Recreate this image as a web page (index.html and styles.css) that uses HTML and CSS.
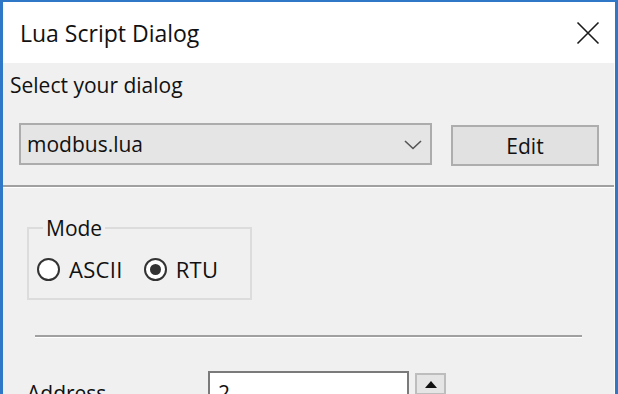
FILE: index.html
```html
<!DOCTYPE html>
<html>
<head>
<meta charset="utf-8">
<link rel="stylesheet" href="styles.css">
</head>
<body>
<div class="window">
  <div class="titlebar">
    <span class="title">Lua Script Dialog</span>
    <svg class="close" width="24" height="24" viewBox="0 0 24 24"><path d="M1.5 1.5 L22.5 22.5 M22.5 1.5 L1.5 22.5" stroke="#1a1a1a" stroke-width="1.6" fill="none"/></svg>
  </div>
  <div class="content">
    <div class="label">Select your dialog</div>
    <div class="combo-row">
      <div class="combo">
        <span class="combo-text">modbus.lua</span>
        <svg class="chevron" width="18" height="10" viewBox="0 0 18 10"><path d="M1 1 L9 8.5 L17 1" stroke="#555" stroke-width="1.6" fill="none"/></svg>
      </div>
      <div class="button">Edit</div>
    </div>
    <div class="sep"></div>
    <fieldset class="group">
      <legend>Mode</legend>
      <div class="radios">
        <label class="radio"><span class="dot"></span>ASCII</label>
        <label class="radio checked"><span class="dot"></span>RTU</label>
      </div>
    </fieldset>
    <div class="sep2"></div>
    <div class="addr-row">
      <span class="addr-label">Address</span>
      <div class="input">2</div>
      <div class="spin"><svg width="12" height="7" viewBox="0 0 12 7"><path d="M0 7 L6 0 L12 7 Z" fill="#111"/></svg></div>
    </div>
  </div>
</div>
</body>
</html>
```

FILE: styles.css
```css
html, body {
  margin: 0;
  padding: 0;
  width: 618px;
  height: 394px;
  overflow: hidden;
  background: #f0f0f0;
}
body {
  font-family: "Open Sans", "Noto Sans", sans-serif;
  color: #111;
}
.window {
  box-sizing: border-box;
  width: 618px;
  height: 394px;
  border-left: 3px solid #2e78c7;
  border-top: 2px solid #2e78c7;
  border-right: 3px solid #2e78c7;
  background: #f0f0f0;
  overflow: hidden;
}
.titlebar {
  height: 61px;
  background: #fff;
  display: flex;
  align-items: center;
  justify-content: space-between;
  padding: 0 15px 0 17px;
}
.title {
  font-size: 23px;
  color: #111;
}
.close {
  display: block;
}
.content {
  border-right: 1px solid #fbfbfb;
}
.label {
  font-size: 21px;
  line-height: 28px;
  padding: 8px 0 0 7px;
}
.combo-row {
  display: flex;
  align-items: flex-start;
  margin-top: 24px;
  padding-left: 16px;
}
.combo {
  box-sizing: border-box;
  width: 413px;
  height: 42px;
  background: #e5e5e5;
  border: 2px solid #acacac;
  display: flex;
  align-items: center;
  justify-content: space-between;
  padding: 0 8px 0 6px;
  font-size: 21px;
}
.chevron {
  display: block;
  margin-top: 1px;
}
.button {
  box-sizing: border-box;
  width: 148px;
  height: 41px;
  margin-top: 2px;
  margin-left: 19px;
  background: #e1e1e1;
  border: 2px solid #adadad;
  display: flex;
  align-items: center;
  justify-content: center;
  font-size: 21px;
}
.sep {
  height: 2px;
  background: #a0a0a0;
  margin-top: 19px;
  border-bottom: 1px solid #fff;
}
.group {
  box-sizing: border-box;
  width: 225px;
  height: 85px;
  margin: 27px 0 0 24px;
  padding: 0 0 0 8px;
  border: 2px solid #dcdcdc;
  min-width: 0;
}
.group legend {
  font-size: 21px;
  line-height: 26px;
  padding: 0 3px;
  margin-left: 6px;
}
.radios {
  display: flex;
  align-items: center;
  gap: 21px;
  margin-top: 13px;
}
.radio {
  display: flex;
  align-items: center;
  font-size: 22px;
  letter-spacing: 0.3px;
}
.dot {
  box-sizing: border-box;
  width: 23px;
  height: 23px;
  border-radius: 50%;
  border: 2px solid #333;
  background: #fff;
  margin-right: 9px;
  display: flex;
  align-items: center;
  justify-content: center;
}
.checked .dot::after {
  content: "";
  width: 11px;
  height: 11px;
  border-radius: 50%;
  background: #333;
}
.sep2 {
  height: 2px;
  background: #a0a0a0;
  border-bottom: 1px solid #fff;
  margin: 35px 0 0 32px;
  width: 547px;
}
.addr-row {
  display: flex;
  align-items: flex-start;
  margin-top: 33px;
  padding-left: 24px;
}
.addr-label {
  font-size: 21px;
  line-height: 28px;
  width: 181px;
  padding-top: 8px;
}
.input {
  box-sizing: border-box;
  width: 201px;
  height: 44px;
  background: #fff;
  border: 2px solid #7a7a7a;
  font-size: 21px;
  padding: 0 8px;
  line-height: 40px;
}
.spin {
  box-sizing: border-box;
  width: 31px;
  height: 22px;
  margin: 2px 0 0 6px;
  background: #e5e5e5;
  border: 2px solid #bdbdbd;
  display: flex;
  align-items: center;
  justify-content: center;
}
.spin svg {
  display: block;
}
```
